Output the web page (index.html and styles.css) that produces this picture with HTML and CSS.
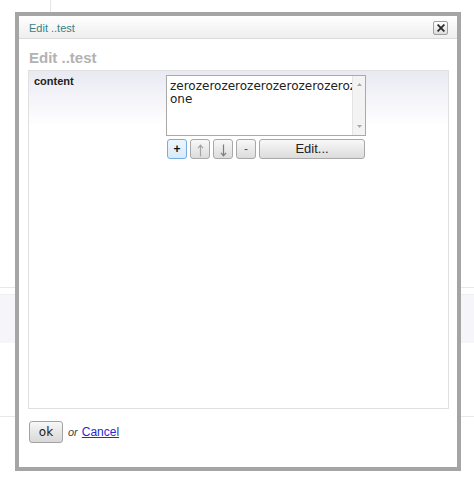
FILE: index.html
```html
<!DOCTYPE html>
<html>
<head>
<meta charset="utf-8">
<title>Edit ..test</title>
<link rel="stylesheet" href="styles.css">
</head>
<body>
<div class="page">
  <div class="backdrop">
    <div class="bg-vline"></div>
    <div class="bg-line bg-line-1"></div>
    <div class="bg-band"></div>
    <div class="bg-line bg-line-2"></div>
  </div>

  <div class="dialog">
    <div class="titlebar">
      <span class="title">Edit ..test</span>
      <button class="close" type="button" aria-label="close">
        <svg width="8" height="8" viewBox="0 0 8 8"><path d="M1.2 1.2 L6.8 6.8 M6.8 1.2 L1.2 6.8" stroke="#2a2a2a" stroke-width="1.8" stroke-linecap="square"/></svg>
      </button>
    </div>
    <div class="dialog-body">
      <h1 class="heading">Edit ..test</h1>
      <div class="panel">
        <div class="field">
          <div class="label">content</div>
          <div class="control">
            <div class="textbox">
              <div class="textbox-text">zerozerozerozerozerozerozerozerozero
one</div>
              <div class="scrollbar">
                <svg width="5" height="3" viewBox="0 0 5 3"><path d="M0 3 L2.5 0 L5 3 Z" fill="#a9a9a9"/></svg>
                <svg width="5" height="3" viewBox="0 0 5 3"><path d="M0 0 L2.5 3 L5 0 Z" fill="#a9a9a9"/></svg>
              </div>
            </div>
            <div class="toolbar">
              <button class="tbtn tbtn-active" type="button">+</button>
              <button class="tbtn tbtn-up" type="button" aria-label="up">
                <svg width="7" height="13" viewBox="0 0 7 13"><path d="M3.5 1.5 V12.5 M1 4.2 L3.5 1.2 L6 4.2" fill="none" stroke="#a4a4a4" stroke-width="1.2"/></svg>
              </button>
              <button class="tbtn tbtn-down" type="button" aria-label="down">
                <svg width="7" height="13" viewBox="0 0 7 13"><path d="M3.5 0.5 V11.5 M1 8.8 L3.5 11.8 L6 8.8" fill="none" stroke="#7c7c7c" stroke-width="1.2"/></svg>
              </button>
              <button class="tbtn tbtn-minus" type="button">-</button>
              <button class="tbtn tbtn-edit" type="button">Edit...</button>
            </div>
          </div>
        </div>
      </div>
      <div class="footer">
        <button class="ok" type="button">ok</button>
        <span class="or">or</span>
        <a class="cancel" href="#">Cancel</a>
      </div>
    </div>
  </div>
</div>
</body>
</html>
```

FILE: styles.css
```css
html, body {
  margin: 0;
  padding: 0;
  background: #ffffff;
}

.page {
  position: relative;
  width: 474px;
  height: 482px;
  overflow: hidden;
  font-family: "Liberation Sans", Arial, sans-serif;
}

/* faint page behind the modal */
.backdrop {
  display: flex;
  flex-direction: column;
}

.bg-vline {
  margin-left: 50px;
  width: 1px;
  height: 12px;
  background: #e6e6e6;
}

.bg-line {
  height: 1px;
  background: #e8e8e8;
}

.bg-line-1 {
  margin-top: 275px;
}

.bg-band {
  margin-top: 6px;
  height: 48px;
  background: #f5f5fa;
  border-top: 1px solid #eeeeee;
}

.bg-line-2 {
  margin-top: 73px;
}

/* modal window */
.dialog {
  position: absolute;
  left: 15px;
  top: 12px;
  width: 446px;
  height: 459px;
  box-sizing: border-box;
  border: 4px solid #a5a5a5;
  background: #ffffff;
  display: flex;
  flex-direction: column;
}

.titlebar {
  height: 23px;
  box-sizing: border-box;
  border-bottom: 1px solid #dadada;
  background: linear-gradient(#ffffff, #eeeeee);
  display: flex;
  align-items: center;
  justify-content: space-between;
  padding: 1px 9px 0 10px;
}

.title {
  font-size: 11px;
  line-height: 20px;
  color: #3a8089;
}

.close {
  width: 15px;
  height: 14px;
  padding: 0;
  margin: 0;
  box-sizing: border-box;
  border: 1px solid #a0a0a0;
  border-radius: 2px;
  background: linear-gradient(#ffffff, #dcdcdc);
  display: flex;
  align-items: center;
  justify-content: center;
}

.dialog-body {
  flex: 1;
  display: flex;
  flex-direction: column;
}

.heading {
  margin: 10px 0 3px 10px;
  font-size: 15px;
  line-height: 18px;
  font-weight: bold;
  color: #b2b2b2;
}

.panel {
  margin: 0 8px 0 9px;
  height: 339px;
  box-sizing: border-box;
  border: 1px solid #e0e0e0;
  background: linear-gradient(#e9e9f3 0px, #ffffff 55px);
}

.field {
  display: flex;
  padding-top: 4px;
}

.label {
  width: 132px;
  padding-left: 5px;
  font-size: 11px;
  line-height: 13px;
  font-weight: bold;
  color: #222222;
}

.control {
  display: flex;
  flex-direction: column;
  width: 200px;
}

.textbox {
  height: 61px;
  box-sizing: border-box;
  border: 1px solid #a9a9a9;
  background: #ffffff;
  display: flex;
}

.textbox-text {
  flex: 1;
  overflow: hidden;
  white-space: pre;
  padding: 4px 0 0 3px;
  font-family: "DejaVu Sans", Verdana, sans-serif;
  font-size: 12px;
  line-height: 13px;
  color: #222222;
}

.scrollbar {
  width: 13px;
  box-sizing: border-box;
  border-left: 1px solid #e4e4e4;
  background: #f3f3f3;
  display: flex;
  flex-direction: column;
  align-items: center;
  justify-content: space-between;
  padding: 7px 0 7px;
}

.toolbar {
  display: flex;
  gap: 3px;
  margin-top: 3px;
  padding-left: 1px;
}

.tbtn {
  width: 20px;
  height: 20px;
  padding: 0;
  margin: 0;
  box-sizing: border-box;
  border: 1px solid #a8a8a8;
  border-radius: 3px;
  background: linear-gradient(#f8f8f8, #dcdcdc);
  font-family: "Liberation Sans", Arial, sans-serif;
  font-size: 12px;
  line-height: 18px;
  color: #333333;
  text-align: center;
  display: flex;
  align-items: center;
  justify-content: center;
}

.tbtn-active {
  border-color: #74aee0;
  background: linear-gradient(#eef6fd, #d8eafa);
  color: #111111;
  font-weight: bold;
}

.tbtn-up svg {
  margin-top: 2px;
}

.tbtn-down svg {
  margin-top: 2px;
}

.tbtn-minus {
  color: #555555;
}

.tbtn-edit {
  width: 106px;
  font-size: 13px;
  color: #222222;
}

.footer {
  display: flex;
  align-items: center;
  padding: 12px 0 0 10px;
}

.ok {
  width: 34px;
  height: 22px;
  padding: 0;
  margin: 0;
  box-sizing: border-box;
  border: 1px solid #a3a3a3;
  border-radius: 3px;
  background: linear-gradient(#f7f7f7, #d8d8d8);
  font-family: "DejaVu Sans", Verdana, sans-serif;
  font-size: 12px;
  line-height: 20px;
  color: #1a1a1a;
}

.or {
  margin-left: 5px;
  font-size: 11px;
  font-style: italic;
  color: #444444;
}

.cancel {
  margin-left: 4px;
  font-size: 12px;
  color: #2a2ad0;
  text-decoration: underline;
}
```
